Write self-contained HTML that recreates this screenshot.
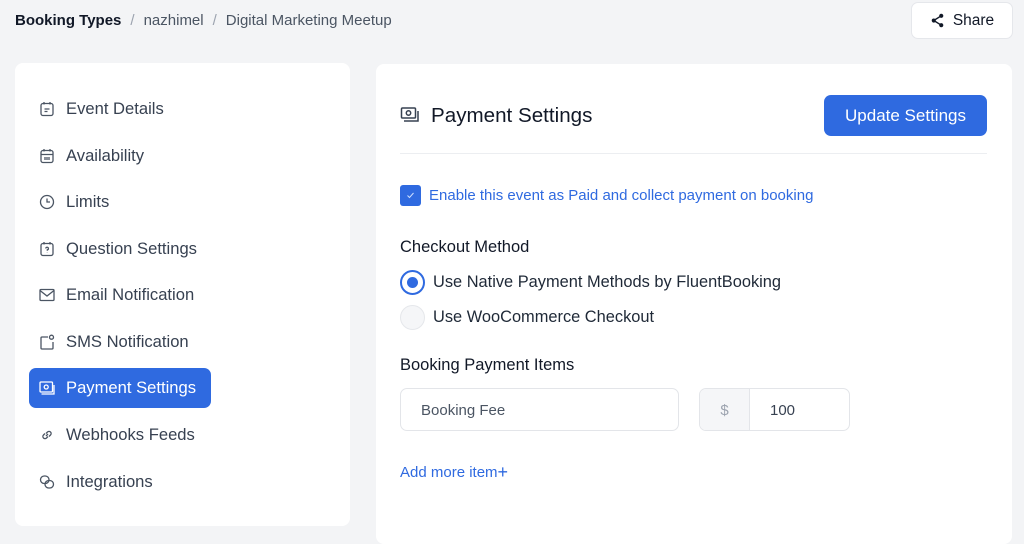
<!DOCTYPE html>
<html><head><style>
*{box-sizing:border-box;margin:0;padding:0}
body{width:1024px;height:536px;background:#f3f4f6;font-family:"Liberation Sans",sans-serif;position:relative;overflow:hidden;color:#1f2937}
.abs{position:absolute}
.bc{left:15px;top:12px;font-size:15px;color:#4b5563;white-space:nowrap}
.bc b{color:#111827}
.bc .s{color:#9ca3af;margin:0 9px}
.share{left:911px;top:2px;width:102px;height:37px;background:#fff;border:1px solid #e5e7eb;border-radius:7px;font-size:15.5px;color:#111827;display:flex;align-items:center;justify-content:center;gap:8px}
.side{left:15px;top:63px;width:335px;height:463px;background:#fff;border-radius:8px}
.it{position:absolute;left:29px;height:40px;width:182px;display:flex;align-items:center;font-size:16.6px;color:#374151;padding-left:10px;white-space:nowrap}
.it svg{width:16px;height:16px;margin-right:11px;flex:none}
.it.act{background:#2f6ae0;color:#fff;border-radius:7px}
.main{left:376px;top:64px;width:636px;height:480px;background:#fff;border-radius:8px}
.btn{left:824px;top:95px;width:163px;height:41px;background:#2f6ae0;border-radius:7px;color:#fff;font-size:17px;display:flex;align-items:center;justify-content:center}
.hr{left:400px;top:153px;width:587px;height:1px;background:#eceef1}
</style></head><body>
<div class="abs bc"><b>Booking Types</b><span class="s">/</span>nazhimel<span class="s">/</span>Digital Marketing Meetup</div>
<div class="abs share"><svg width="15" height="15" viewBox="0 0 16 16" fill="#111827"><circle cx="12" cy="3" r="2.2"/><circle cx="4" cy="8" r="2.2"/><circle cx="12" cy="13" r="2.2"/><path d="M12 3L4 8l8 5" stroke="#111827" stroke-width="1.5" fill="none"/></svg>Share</div>
<div class="abs side"></div>
<div class="it" style="top:89px"><svg viewBox="0 0 16 16" fill="none" stroke="#4b5563" stroke-width="1.3"><rect x="2" y="2.5" width="12" height="12" rx="2"/><path d="M5 1v2.5M11 1v2.5M5.5 8h5M5.5 10.5h3"/></svg>Event Details</div>
<div class="it" style="top:136px"><svg viewBox="0 0 16 16" fill="none" stroke="#4b5563" stroke-width="1.3"><rect x="2" y="2.5" width="12" height="12" rx="2"/><path d="M5 1v2.5M11 1v2.5M2 6.5h12M6 9v3M8 9v3M10 9v3"/></svg>Availability</div>
<div class="it" style="top:182px"><svg viewBox="0 0 16 16" fill="none" stroke="#4b5563" stroke-width="1.3"><circle cx="8" cy="8" r="6.5"/><path d="M8 4.5V8h3"/></svg>Limits</div>
<div class="it" style="top:229px"><svg viewBox="0 0 16 16" fill="none" stroke="#4b5563" stroke-width="1.3"><rect x="2" y="2.5" width="12" height="12" rx="2"/><path d="M5 1v2.5M11 1v2.5M6.8 7.5a1.3 1.3 0 1 1 1.5 1.3v1M8.2 11.5v.3"/></svg>Question Settings</div>
<div class="it" style="top:275px"><svg viewBox="0 0 16 16" fill="none" stroke="#4b5563" stroke-width="1.3"><rect x="1" y="2.5" width="14" height="11" rx="1"/><path d="M1 3.5l7 5.5 7-5.5"/></svg>Email Notification</div>
<div class="it" style="top:322px"><svg viewBox="0 0 16 16" fill="none" stroke="#4b5563" stroke-width="1.3"><path d="M9 3H3a1 1 0 0 0-1 1v10a1 1 0 0 0 1 1h10a1 1 0 0 0 1-1V8"/><circle cx="12.5" cy="3.2" r="2"/></svg>SMS Notification</div>
<div class="it act" style="top:368px"><svg viewBox="0 0 16 16" fill="none" stroke="#fff" stroke-width="1.3"><rect x="1" y="2" width="12.5" height="10" rx="1"/><circle cx="7.2" cy="7" r="2"/><path d="M2.5 14h12.5V5"/></svg>Payment Settings</div>
<div class="it" style="top:415px"><svg viewBox="0 0 16 16" fill="none" stroke="#4b5563" stroke-width="1.3"><path d="M7 9l2-2M6 6.5L4.5 8a2.1 2.1 0 0 0 3 3L9 9.5M10 9.5L11.5 8a2.1 2.1 0 0 0-3-3L7 6.5"/></svg>Webhooks Feeds</div>
<div class="it" style="top:462px"><svg viewBox="0 0 16 16" fill="none" stroke="#4b5563" stroke-width="1.3"><rect x="1.5" y="2" width="8.5" height="7.5" rx="3.7"/><rect x="6" y="6.5" width="8.5" height="7.5" rx="3.7"/></svg>Integrations</div>
<div class="abs main"></div>
<svg class="abs" style="left:400px;top:106px" width="20" height="18" viewBox="0 0 20 18" fill="none" stroke="#374151" stroke-width="1.5"><rect x="1.5" y="2" width="14" height="10" rx="1"/><circle cx="8.5" cy="7" r="2.2"/><path d="M4 15h14V5"/></svg>
<div class="abs" style="left:431px;top:104px;font-size:20.6px;color:#111827">Payment Settings</div>
<div class="abs btn">Update Settings</div>
<div class="abs hr"></div>
<div class="abs" style="left:400px;top:185px;width:21px;height:21px;background:#2f6ae0;border-radius:3px"><svg width="21" height="21" viewBox="0 0 21 21"><path d="M7.5 10.5l2 2 4-4.5" stroke="#cfe0ff" stroke-width="1" fill="none"/></svg></div>
<div class="abs" style="left:429px;top:187px;font-size:15px;color:#2f6ae0;white-space:nowrap">Enable this event as Paid and collect payment on booking</div>
<div class="abs" style="left:400px;top:238px;font-size:16.5px;color:#111827">Checkout Method</div>
<div class="abs" style="left:400px;top:270px;width:25px;height:25px;border:2px solid #2f6ae0;border-radius:50%;background:#fff"><div style="position:absolute;left:5px;top:5px;width:11px;height:11px;border-radius:50%;background:#2f6ae0"></div></div>
<div class="abs" style="left:433px;top:273px;font-size:16.4px;color:#1f2937;white-space:nowrap">Use Native Payment Methods by FluentBooking</div>
<div class="abs" style="left:400px;top:305px;width:25px;height:25px;border:1px solid #e5e7eb;border-radius:50%;background:#f5f6f8"></div>
<div class="abs" style="left:433px;top:308px;font-size:16.4px;color:#1f2937">Use WooCommerce Checkout</div>
<div class="abs" style="left:400px;top:356px;font-size:16.5px;color:#111827">Booking Payment Items</div>
<div class="abs" style="left:400px;top:388px;width:279px;height:43px;border:1px solid #e3e5e9;border-radius:7px;font-size:15px;color:#4b5563;padding:13px 0 0 20px">Booking Fee</div>
<div class="abs" style="left:699px;top:388px;width:151px;height:43px;border:1px solid #e3e5e9;border-radius:7px;overflow:hidden;display:flex;font-size:15px">
<div style="width:50px;background:#f5f6f8;border-right:1px solid #e3e5e9;color:#9ca3af;text-align:center;padding-top:13px">$</div>
<div style="padding:13px 0 0 20px;color:#374151">100</div></div>
<div class="abs" style="left:400px;top:461px;font-size:15px;color:#2f6ae0">Add more item<span style="font-size:18px;font-weight:300;position:relative;top:1px">+</span></div>
</body></html>
